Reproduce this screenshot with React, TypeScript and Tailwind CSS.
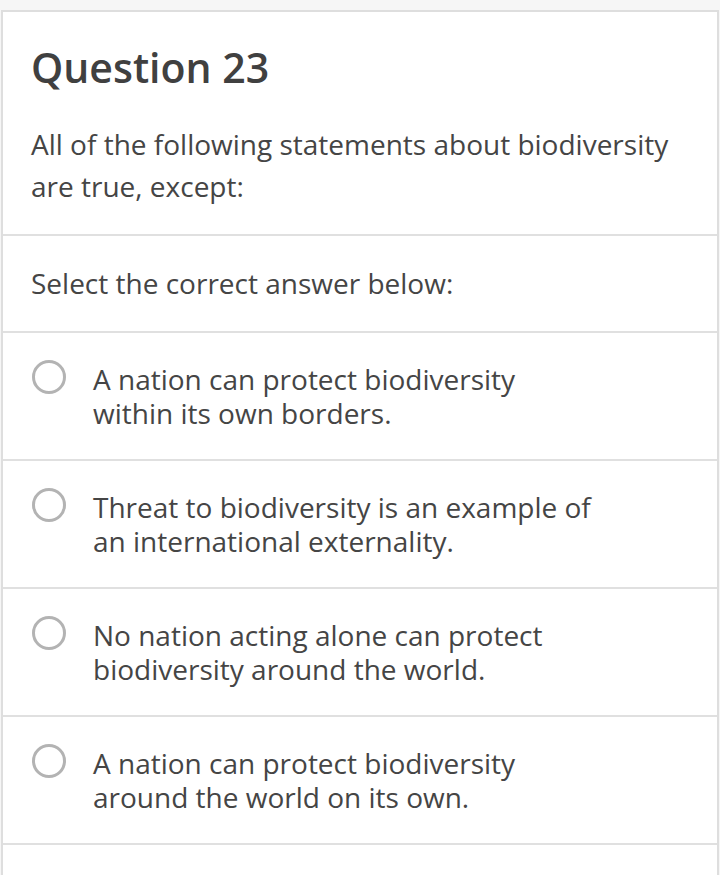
const options = [
  ['A nation can protect biodiversity', 'within its own borders.'],
  ['Threat to biodiversity is an example of', 'an international externality.'],
  ['No nation acting alone can protect', 'biodiversity around the world.'],
  ['A nation can protect biodiversity', 'around the world on its own.'],
]

function Radio() {
  return (
    <svg width="34" height="34" viewBox="0 0 34 34" className="shrink-0">
      <circle cx="17" cy="17" r="15.5" fill="none" stroke="#b3b3b3" strokeWidth="3" />
    </svg>
  )
}

export default function App() {
  return (
    <div className="min-h-[875px] bg-[#f6f6f6] pt-[10px] pl-px pr-[1px] font-['Open_Sans',sans-serif] text-[#454545]">
      <div className="border-2 border-[#dedede] bg-white">
        <div className="px-[28px] pt-[28px]">
          <h1 className="text-[41px] font-semibold leading-[54px] text-[#404040]">Question 23</h1>
        </div>
        <div className="px-[28px] pt-[29px] pb-[27px]">
          <p className="text-[28px] leading-[42px]">
            All of the following statements about biodiversity are true, except:
          </p>
        </div>
        <div className="border-t-2 border-[#e0e0e0] px-[28px] pt-[30px] pb-[31px]">
          <p className="text-[28px] leading-[34px]">Select the correct answer below:</p>
        </div>
        {options.map((o) => (
          <div key={o[0]} className="flex h-[128px] items-start gap-[27px] border-t-2 border-[#e0e0e0] pl-[29px] pr-[28px] pt-[27px]">
            <Radio />
            <p className="pt-[2px] text-[28px] leading-[34px]">
              <span className="block">{o[0]}</span>
              <span className="block">{o[1]}</span>
            </p>
          </div>
        ))}
        <div className="h-[40px] border-t-2 border-[#e0e0e0]" />
      </div>
    </div>
  )
}
